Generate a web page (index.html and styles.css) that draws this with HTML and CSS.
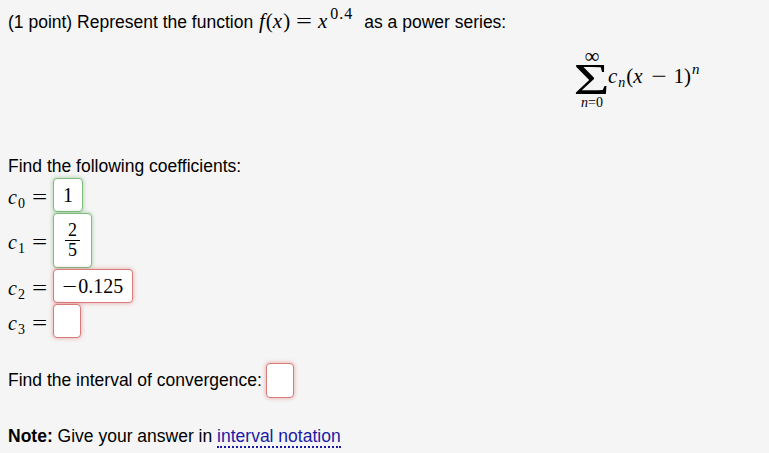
FILE: index.html
```html
<!DOCTYPE html>
<html>
<head>
<meta charset="utf-8">
<link rel="stylesheet" href="styles.css">
</head>
<body>
<p class="intro">(1 point) Represent the function <span class="m"><i>f</i>(<i>x</i>)<span class="rel">=</span><i>x</i><sup class="sup">0.4</sup></span> as a power series:</p>

<div class="display">
  <span class="m series">
    <span class="sum">
      <span class="lim-top">∞</span>
      <span class="sigma">Σ</span>
      <span class="lim-bot"><i>n</i>=0</span>
    </span>
    <span class="term"><i>c</i><sub class="sub"><i>n</i></sub>(<i>x</i><span class="op">−</span>1)<sup class="sup"><i>n</i></sup></span>
  </span>
</div>

<p class="find">Find the following coefficients:</p>

<div class="coefs">
  <div class="row">
    <span class="m label"><i>c</i><sub class="sub">0</sub><span class="rel">=</span></span>
    <span class="box ok m">1</span>
  </div>
  <div class="row">
    <span class="m label"><i>c</i><sub class="sub">1</sub><span class="rel">=</span></span>
    <span class="box ok m frac-box"><span class="frac"><span class="num">2</span><span class="den">5</span></span></span>
  </div>
  <div class="row">
    <span class="m label"><i>c</i><sub class="sub">2</sub><span class="rel">=</span></span>
    <span class="box bad m"><span class="neg">−</span>0.125</span>
  </div>
  <div class="row">
    <span class="m label"><i>c</i><sub class="sub">3</sub><span class="rel">=</span></span>
    <span class="box bad m empty"></span>
  </div>
</div>

<p class="interval">Find the interval of convergence: <span class="box bad empty tall"></span></p>

<p class="note"><b>Note:</b> Give your answer in <a class="link" href="#">interval notation</a></p>
</body>
</html>
```

FILE: styles.css
```css
html, body {
  background: #f5f5f5;
}
body {
  margin: 8px;
  font-family: "Liberation Sans", Arial, sans-serif;
  font-size: 17.5px;
  color: #000;
}
p {
  margin: 0;
}
.m {
  font-family: "Liberation Serif", "DejaVu Serif", serif;
  font-size: 20px;
}
.m i {
  font-style: italic;
  padding-right: 1px;
}
.rel {
  display: inline-block;
  margin: 0 8px;
  transform: scaleX(1.35);
}
.op {
  display: inline-block;
  margin: 0 9px;
  transform: scaleX(1.3);
}
.neg {
  display: inline-block;
  margin: 0 3px 0 1px;
  transform: scaleX(1.3);
}
.sup {
  font-size: 15px;
  vertical-align: 9px;
  line-height: 0;
  margin-left: 1px;
}
.sub {
  font-size: 14px;
  vertical-align: -4px;
  line-height: 0;
}
.intro {
  line-height: 26px;
}
.intro .m {
  font-size: 21px;
  margin: 0 6px 0 1px;
}
.intro .sup {
  font-size: 16px;
  letter-spacing: 1px;
  margin-left: 2px;
}
.display {
  margin-top: 19px;
  padding-left: 569px;
  height: 68px;
}
.series {
  display: flex;
  align-items: flex-start;
}
.sum {
  display: flex;
  flex-direction: column;
  align-items: center;
  width: 30px;
  flex: none;
}
.lim-top {
  font-size: 21px;
  line-height: 4px;
  height: 10px;
}
.sigma {
  font-size: 40px;
  line-height: 25px;
  height: 25px;
  transform: translateY(2px) scale(1.55, 1.12);
}
.lim-bot {
  font-size: 14px;
  line-height: 14px;
  margin-top: 7px;
}
.lim-bot i {
  padding-right: 0;
}
.term {
  margin-left: 1px;
  margin-top: 10px;
  font-size: 21px;
  line-height: 24px;
  white-space: nowrap;
}
.term .sup {
  font-size: 15px;
}
.find {
  margin-top: 32px;
  line-height: 24px;
}
.coefs {
  margin-top: 0;
  display: flex;
  flex-direction: column;
  gap: 1px;
}
.row {
  display: flex;
  align-items: center;
}
.label {
  width: 45px;
  margin-top: 4px;
  white-space: nowrap;
}
.label .rel {
  margin: 0 0 0 9px;
}
.box {
  display: inline-flex;
  align-items: center;
  justify-content: center;
  box-sizing: border-box;
  height: 34px;
  min-width: 28px;
  padding: 0 9px;
  background: #fff;
  border-radius: 4px;
  line-height: 1;
}
.tall {
  height: 35px;
}
.ok {
  border: 1px solid #7fba7f;
  box-shadow: 0 0 4px rgba(90, 170, 90, 0.55);
}
.bad {
  border: 1px solid #d97b7b;
  box-shadow: 0 0 4px rgba(220, 90, 90, 0.55);
}
.empty {
  width: 28px;
  padding: 0;
}
.frac-box {
  height: 55px;
  width: 39px;
}
.frac {
  display: inline-flex;
  flex-direction: column;
  align-items: center;
  font-size: 18px;
}
.num {
  padding: 0 1px 1px;
  border-bottom: 1px solid #000;
  width: 13px;
  text-align: center;
  line-height: 17px;
}
.den {
  line-height: 17px;
  padding-top: 1px;
}
.interval {
  margin-top: 25px;
  display: flex;
  align-items: center;
  gap: 4px;
}
.note {
  margin-top: 28px;
  line-height: 20px;
}
.link {
  display: inline-block;
  color: #1a1aa6;
  text-decoration: none;
  line-height: 18px;
  padding-bottom: 1px;
  border-bottom: 2px dotted #1a1aa6;
}
```
